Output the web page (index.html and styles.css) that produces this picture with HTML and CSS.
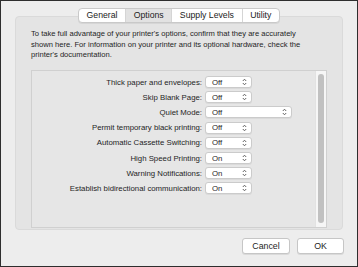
FILE: index.html
```html
<!DOCTYPE html>
<html>
<head>
<meta charset="utf-8">
<link rel="stylesheet" href="styles.css">
</head>
<body>
<div class="window">
  <div class="tabs">
    <div class="tab">General</div>
    <div class="tab selected">Options</div>
    <div class="tab">Supply Levels</div>
    <div class="tab">Utility</div>
  </div>
  <div class="panel">
    <p class="desc">To take full advantage of your printer's options, confirm that they are accurately<br>shown here. For information on your printer and its optional hardware, check the<br>printer's documentation.</p>
    <div class="list">
      <div class="rows">
        <div class="label">Thick paper and envelopes:</div>
        <div class="popup"><span>Off</span><svg class="chev" width="5" height="8" viewBox="0 0 5 8"><path d="M0.8 3 L2.5 1.2 L4.2 3 M0.8 5 L2.5 6.8 L4.2 5" fill="none" stroke="#555" stroke-width="0.9"/></svg></div>
        <div class="label">Skip Blank Page:</div>
        <div class="popup"><span>Off</span><svg class="chev" width="5" height="8" viewBox="0 0 5 8"><path d="M0.8 3 L2.5 1.2 L4.2 3 M0.8 5 L2.5 6.8 L4.2 5" fill="none" stroke="#555" stroke-width="0.9"/></svg></div>
        <div class="label">Quiet Mode:</div>
        <div class="popup wide"><span>Off</span><svg class="chev" width="5" height="8" viewBox="0 0 5 8"><path d="M0.8 3 L2.5 1.2 L4.2 3 M0.8 5 L2.5 6.8 L4.2 5" fill="none" stroke="#555" stroke-width="0.9"/></svg></div>
        <div class="label">Permit temporary black printing:</div>
        <div class="popup"><span>Off</span><svg class="chev" width="5" height="8" viewBox="0 0 5 8"><path d="M0.8 3 L2.5 1.2 L4.2 3 M0.8 5 L2.5 6.8 L4.2 5" fill="none" stroke="#555" stroke-width="0.9"/></svg></div>
        <div class="label">Automatic Cassette Switching:</div>
        <div class="popup"><span>Off</span><svg class="chev" width="5" height="8" viewBox="0 0 5 8"><path d="M0.8 3 L2.5 1.2 L4.2 3 M0.8 5 L2.5 6.8 L4.2 5" fill="none" stroke="#555" stroke-width="0.9"/></svg></div>
        <div class="label">High Speed Printing:</div>
        <div class="popup"><span>On</span><svg class="chev" width="5" height="8" viewBox="0 0 5 8"><path d="M0.8 3 L2.5 1.2 L4.2 3 M0.8 5 L2.5 6.8 L4.2 5" fill="none" stroke="#555" stroke-width="0.9"/></svg></div>
        <div class="label">Warning Notifications:</div>
        <div class="popup"><span>On</span><svg class="chev" width="5" height="8" viewBox="0 0 5 8"><path d="M0.8 3 L2.5 1.2 L4.2 3 M0.8 5 L2.5 6.8 L4.2 5" fill="none" stroke="#555" stroke-width="0.9"/></svg></div>
        <div class="label">Establish bidirectional communication:</div>
        <div class="popup"><span>On</span><svg class="chev" width="5" height="8" viewBox="0 0 5 8"><path d="M0.8 3 L2.5 1.2 L4.2 3 M0.8 5 L2.5 6.8 L4.2 5" fill="none" stroke="#555" stroke-width="0.9"/></svg></div>
      </div>
      <div class="scrollbar"><div class="thumb"></div></div>
    </div>
  </div>
  <div class="buttons">
    <div class="btn cancel">Cancel</div>
    <div class="btn ok">OK</div>
  </div>
</div>
</body>
</html>
```
FILE: styles.css
```css
* { box-sizing: border-box; }
html, body { margin: 0; padding: 0; }
body {
  width: 358px;
  height: 267px;
  font-family: "Liberation Sans", Arial, sans-serif;
  color: #1a1a1a;
  background: #ececec;
}
.window {
  width: 358px;
  height: 267px;
  border: 1px solid #2e2e2e;
  background: #ededed;
  padding-top: 7px;
  display: flex;
  flex-direction: column;
}
.tabs {
  align-self: flex-start;
  margin-left: 77px;
  display: flex;
  height: 15px;
  background: #fff;
  border: 1px solid #c9c9c9;
  border-radius: 4px;
  position: relative;
  z-index: 1;
  overflow: hidden;
  box-shadow: 0 1px 0 rgba(0,0,0,0.06);
}
.tab {
  font-size: 8.7px;
  line-height: 13px;
  padding: 0 7.6px;
  border-left: 1px solid #d5d5d5;
  color: #222;
}
.tab:first-child { border-left: none; }
.tab.selected { background: #e2e2e2; }
.panel {
  margin: -7px 14px 0 14px;
  height: 214px;
  background: #e4e4e4;
  border: 1px solid #dadada;
  border-radius: 4px;
  padding: 12px 15px 0 15px;
}
.desc {
  margin: 0;
  font-size: 7.6px;
  line-height: 10.5px;
  color: #1e1e1e;
  white-space: nowrap;
}
.list {
  margin-top: 9px;
  height: 158px;
  background: #e6e6e6;
  border: 1px solid #d0d0d0;
  display: flex;
}
.rows {
  flex: 1;
  padding-top: 4px;
  display: grid;
  grid-template-columns: 170px auto;
  grid-auto-rows: 15.2px;
  column-gap: 3px;
  align-items: center;
  align-content: start;
}
.label {
  text-align: right;
  font-size: 7.8px;
  color: #1e1e1e;
  white-space: nowrap;
}
.popup {
  width: 47px;
  height: 12px;
  background: #fff;
  border: 1px solid #cbcbcb;
  border-radius: 3px;
  display: flex;
  align-items: center;
  justify-content: space-between;
  padding: 0 4px 0 6px;
  font-size: 7.8px;
  color: #1e1e1e;
  box-shadow: 0 1px 0 rgba(0,0,0,0.05);
}
.popup.wide { width: 87px; }
.chev { display: block; }
.scrollbar {
  width: 11px;
  background: #f6f6f6;
  border-left: 1px solid #e2e2e2;
  padding: 3px 2px 4px 2px;
}
.thumb {
  width: 6px;
  height: 100%;
  background: #c1c1c1;
  border-radius: 3px;
}
.buttons {
  display: flex;
  justify-content: flex-end;
  gap: 7px;
  padding-right: 13px;
  margin-top: 8px;
}
.btn {
  height: 16px;
  background: #fff;
  border: 1px solid #c6c6c6;
  border-radius: 3px;
  font-size: 8.8px;
  line-height: 14px;
  text-align: center;
  color: #1e1e1e;
  box-shadow: 0 1px 0 rgba(0,0,0,0.08);
}
.cancel { width: 48px; }
.ok { width: 47px; }
```
